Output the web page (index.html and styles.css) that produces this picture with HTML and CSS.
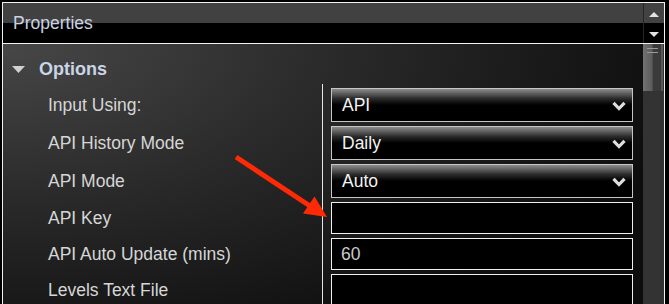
FILE: index.html
```html
<!DOCTYPE html>
<html lang="en">
<head>
    <meta charset="UTF-8">
    <meta name="viewport" content="width=device-width, initial-scale=1.0">
    <title>Properties</title>
    <link rel="stylesheet" href="styles.css">
</head>
<body>
    <div class="panel">
        <div class="titlebar">
            <div class="title">Properties</div>
            <div class="spin">
                <div class="spin-up"><span class="tri-up"></span></div>
                <div class="spin-down"><span class="tri-down"></span></div>
            </div>
        </div>

        <div class="body">
            <div class="content">
                <div class="group">
                    <svg class="caret" width="13" height="7" viewBox="0 0 13 7"><polygon points="0,0 13,0 6.5,7" fill="#d0d0d0"/></svg>
                    Options
                </div>

                <!-- property rows -->
                <div class="row select">
                    <div class="label">Input Using:</div>
                    <div class="value"><div class="dropdown"><span>API</span><svg class="chev" width="14" height="10" viewBox="0 0 14 10"><polyline points="1.5,1.8 7,7.5 12.5,1.8" fill="none" stroke="#dedede" stroke-width="3.2"/></svg></div></div>
                </div>
                <div class="row select">
                    <div class="label">API History Mode</div>
                    <div class="value"><div class="dropdown"><span>Daily</span><svg class="chev" width="14" height="10" viewBox="0 0 14 10"><polyline points="1.5,1.8 7,7.5 12.5,1.8" fill="none" stroke="#dedede" stroke-width="3.2"/></svg></div></div>
                </div>
                <div class="row select">
                    <div class="label">API Mode</div>
                    <div class="value"><div class="dropdown"><span>Auto</span><svg class="chev" width="14" height="10" viewBox="0 0 14 10"><polyline points="1.5,1.8 7,7.5 12.5,1.8" fill="none" stroke="#dedede" stroke-width="3.2"/></svg></div></div>
                </div>
                <div class="row text">
                    <div class="label">API Key</div>
                    <div class="value"><div class="field"></div></div>
                </div>
                <div class="row text">
                    <div class="label">API Auto Update (mins)</div>
                    <div class="value"><div class="field">60</div></div>
                </div>
                <div class="row text">
                    <div class="label">Levels Text File</div>
                    <div class="value"><div class="field"></div></div>
                </div>
            </div>

            <div class="scrollbar">
                <div class="thumb">
                    <div class="grip"></div>
                    <div class="grip"></div>
                </div>
            </div>
        </div>
    </div>

    <!-- red pointer drawn on top of the screenshot -->
    <svg class="pointer" width="669" height="304" viewBox="0 0 669 304">
        <line x1="236" y1="157" x2="310" y2="206" stroke="#fe2a06" stroke-width="5"/>
        <polygon points="327,217 303,213.5 314.5,196.5" fill="#fe2a06"/>
    </svg>
</body>
</html>
```

FILE: styles.css
```css
html, body {
    overflow: hidden;
}

body {
    margin: 0;
    background-color: #000;
    font-family: "Liberation Sans", Arial, sans-serif;
    position: relative;
}

/* outer frame */
.panel {
    margin: 2px 0 0 2px;
    width: 661px;
    height: 320px;
    border: 1px solid #f2f2f2;
    overflow: hidden;
}

/* title bar */
.titlebar {
    display: flex;
    height: 40px;
    border-bottom: 1px solid #f2f2f2;
}

.title {
    flex: 1;
    padding-left: 10px;
    line-height: 40px;
    font-size: 17.5px;
    color: #c9d3e1;
    background: linear-gradient(#414141 50%, #000 50%);
}

.spin {
    width: 20px;
    border-left: 1px solid #262626;
}

.spin-up, .spin-down {
    height: 20px;
    display: flex;
    align-items: center;
    justify-content: center;
}

.spin-up {
    background-color: #424242;
}

.spin-down {
    background-color: #000;
}

.tri-up {
    width: 0;
    height: 0;
    border-left: 5.5px solid transparent;
    border-right: 5.5px solid transparent;
    border-bottom: 5px solid #e2e2e2;
    margin-top: 2px;
}

.tri-down {
    width: 0;
    height: 0;
    border-left: 5.5px solid transparent;
    border-right: 5.5px solid transparent;
    border-top: 5px solid #e2e2e2;
    margin-top: 3px;
}

/* body */
.body {
    display: flex;
    height: 280px;
}

.content {
    width: 640px;
    background: radial-gradient(ellipse 700px 330px at 0 0, #474747 0%, #2b2b2b 45%, #0d0d0d 100%);
}

.group {
    display: flex;
    align-items: center;
    padding: 10px 0 0 9px;
    height: 30px;
    font-size: 18px;
    font-weight: bold;
    color: #c9d5e6;
}

.caret {
    margin-right: 14px;
    margin-top: 1px;
}

.row {
    display: flex;
}

.label {
    width: 274px;
    padding: 4px 0 0 45px;
    font-size: 17.5px;
    color: #d6d6d6;
}

.select .label {
    line-height: 34px;
}

.text .label {
    line-height: 32px;
}

.value {
    width: 302px;
    border-left: 1px solid #e6e6e6;
    padding: 4px 10px 0 8px;
}

.dropdown {
    height: 32px;
    border: 1px solid #c6c6c6;
    background: linear-gradient(#8c8c8c 0%, #2a2a2a 30%, #000 50%, #000 100%);
    display: flex;
    align-items: center;
    justify-content: space-between;
    padding: 0 6px 0 10px;
    font-size: 17.5px;
    color: #f2f2f2;
}

.chev {
    margin-top: 2px;
}

.field {
    height: 30px;
    border: 1px solid #f0f0f0;
    background-color: #000;
    padding-left: 9px;
    line-height: 30px;
    font-size: 17.5px;
    color: #cacaca;
}

/* scrollbar */
.scrollbar {
    width: 21px;
    background-color: #333;
}

.thumb {
    height: 47px;
    width: 20px;
    padding-top: 4px;
    box-sizing: border-box;
    background: linear-gradient(to right, #727272 0%, #5c5c5c 45%, #3a3a3a 52%, #3a3a3a 88%, #5a5a5a 92%, #5a5a5a 100%);
}

.grip {
    width: 11px;
    height: 1px;
    margin: 0 0 3px 4px;
    background-color: #9a9a9a;
}

/* red arrow overlay */
.pointer {
    position: absolute;
    left: 0;
    top: 0;
    pointer-events: none;
}
```
